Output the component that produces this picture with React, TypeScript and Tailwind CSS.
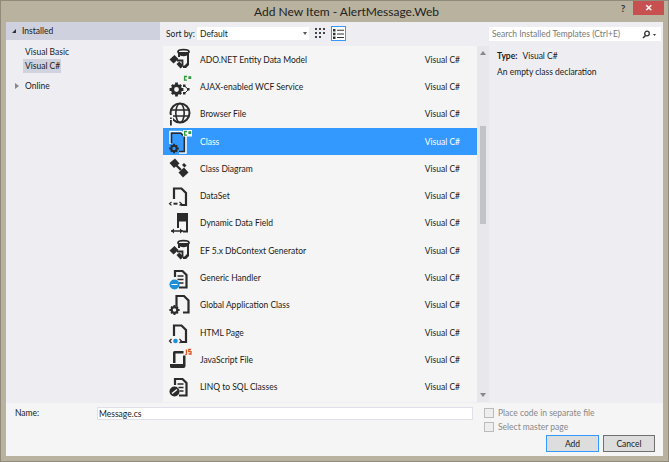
const font = { fontFamily: 'Lato, "Open Sans", sans-serif' };

const Dark = '#2b2b2b';

function Gear({ x, y, s = 1 }: { x: number; y: number; s?: number }) {
  return (
    <g transform={`translate(${x} ${y}) scale(${s})`}>
      <circle r="3.4" fill="none" stroke={Dark} strokeWidth="2.6" />
      <path d="M-1.200 -6h2.400v2h-2.400zM-1.200 4h2.400v2h-2.400zM-6 -1.200h2v2.400h-2zM4 -1.200h2v2.400h-2z" fill={Dark} />
      <path d="M-4.800 -3.200l1.600 -1.600 1.400 1.400 -1.600 1.600zM3.200 -4.800l1.600 1.600 -1.400 1.400 -1.600 -1.600zM-4.800 3.200l1.600 1.600 1.400 -1.400 -1.600 -1.600zM3.200 4.800l1.600 -1.600 -1.400 -1.400 -1.600 1.600z" fill={Dark} />
    </g>
  );
}

function CSharp() {
  return (
    <g>
      <path d="M19 1.500h-2.400v3.600h2.400" fill="none" stroke="#2f9a3f" strokeWidth="1.400" />
      <path d="M20.400 1.200h2.800v2.800h-2.800z" fill="#2f9a3f" />
    </g>
  );
}

function Sheet() {
  return <path d="M6 15V4.500h7.500L18 9v12h-5.500" fill="none" stroke={Dark} strokeWidth="2.200" />;
}

function Entity() {
  return (
    <svg width="24" height="24" viewBox="0 0 24 24">
      <ellipse cx="15.500" cy="3.800" rx="5.500" ry="2.200" fill="none" stroke={Dark} strokeWidth="1.800" />
      <path d="M10 4v5h2V7.500c2 1 5 1 7 0V15l-2.500 2.500H15V20h3l3-3V4z" fill={Dark} />
      <path d="M1.500 11.500L6.500 7l4 4-5 4.500z" fill={Dark} />
      <path d="M9 12.500h5.500V17" fill="none" stroke={Dark} strokeWidth="1.800" />
      <path d="M8.500 16l3-2.500 4 4.500-3 2.500z" fill={Dark} />
    </svg>
  );
}

function Icon({ name }: { name: string }) {
  const common = { width: 24, height: 24, viewBox: '0 0 24 24' };
  switch (name) {
    case 'ado':
    case 'ef':
      return <Entity />;
    case 'ajax':
      return (
        <svg {...common}>
          <CSharp />
          <Gear x={8.500} y={14.500} s={1.150} />
          <path d="M15 9.500h2.500V12H15zM19 13h2.500v2.500H19zM15 17h2.500v2.500H15z" fill={Dark} />
          <path d="M16.500 11l4 3.500-4 4" fill="none" stroke={Dark} strokeWidth="1" />
        </svg>
      );
    case 'browser':
      return (
        <svg {...common}>
          <circle cx="12" cy="11" r="9.500" fill="none" stroke={Dark} strokeWidth="2" />
          <ellipse cx="12" cy="11" rx="4.200" ry="9.500" fill="none" stroke={Dark} strokeWidth="1.600" />
          <path d="M3 8h18M3 14h18" stroke={Dark} strokeWidth="1.600" />
          <path d="M1 13h4v11H1z" fill="#f5f5f5" />
          <path d="M2 18h1.800v5.500H2zM2 15.500h1.800v1.500H2z" fill={Dark} />
        </svg>
      );
    case 'class':
      return (
        <svg {...common}>
          <path d="M2 14V1.500h11.500L18 6v17H11" fill="none" stroke="#fff" strokeWidth="1.500" />
          <path d="M3.500 13V3.200h9.300l3.500 3.500v14.800H11" fill="none" stroke={Dark} strokeWidth="1.500" />
          <Gear x={6} y={18.500} s={0.800} />
          <rect x="15" y="0" width="9" height="6.500" fill="#fff" />
          <CSharp />
        </svg>
      );
    case 'diagram':
      return (
        <svg {...common}>
          <path d="M1.500 6L7 1.500 11.500 6.500 6 11z" fill={Dark} />
          <path d="M10.500 15.500l5.500-5 4.500 5-5.500 5z" fill={Dark} />
          <path d="M8 8l5 5" stroke={Dark} strokeWidth="2.200" />
          <path d="M14 8l2-2 2.500 2.500-2 2z" fill={Dark} />
        </svg>
      );
    case 'dataset':
      return (
        <svg {...common}>
          <Sheet />
          <path d="M3.500 18l-2 1.700 2 1.700M11.500 18l2 1.700-2 1.700" fill="none" stroke={Dark} strokeWidth="1.200" />
          <path d="M5.500 18.700h4v2h-4z" fill={Dark} />
        </svg>
      );
    case 'dynamic':
      return (
        <svg {...common}>
          <path d="M9 2h11v19.500h-5v-2h3V10.500h-7V17H9z" fill={Dark} />
          <path d="M3 20h12" stroke={Dark} strokeWidth="1.500" />
          <path d="M6 17.500v5L3 20zM12 17.500v5l3-2.500z" fill={Dark} />
        </svg>
      );
    case 'handler':
      return (
        <svg {...common}>
          <path d="M7 11V5h7.500l4 4v12.500H11" fill="none" stroke={Dark} strokeWidth="2.200" />
          <path d="M9.500 10h6M9.500 13.500h6M11 17h4.500" stroke={Dark} strokeWidth="1.600" />
          <circle cx="6.500" cy="18.500" r="5" fill="#1e8fd8" />
          <path d="M3.500 18.500h6" stroke="#fff" strokeWidth="1" />
        </svg>
      );
    case 'global':
      return (
        <svg {...common}>
          <g transform="translate(2.500 -1.500)">
            <Sheet />
          </g>
          <Gear x={6.500} y={17} s={0.850} />
        </svg>
      );
    case 'html':
      return (
        <svg {...common}>
          <Sheet />
          <path d="M3.500 18l-2 2 2 2M11.500 18l2 2-2 2" fill="none" stroke={Dark} strokeWidth="1.200" />
          <circle cx="7.500" cy="20" r="2.300" fill="#1e8fd8" />
        </svg>
      );
    case 'js':
      return (
        <svg {...common}>
          <path d="M15.500 3H6.500Q5 3 5 4.500V15h2.500V5.500h8z" fill={Dark} />
          <path d="M15 7.500h2.500V18q0 2-2 2H3.500q-1.500 0-1.500-1.500V16h13z" fill={Dark} />
          <path d="M18.500 1.500v4.200q0 1-1.300 1M23 1.500h-2.200v2.200H23V6h-2.400" fill="none" stroke="#d9541e" strokeWidth="1.300" />
        </svg>
      );
    case 'linq':
      return (
        <svg {...common}>
          <path d="M7 10V4h7.500l4 4v12.500H11" fill="none" stroke={Dark} strokeWidth="2.200" />
          <path d="M9.500 9h6M10.500 12.500h5M11.500 16h4" stroke={Dark} strokeWidth="1.600" />
          <circle cx="6.500" cy="16.500" r="5" fill={Dark} />
          <path d="M4 18.500l5-4" stroke="#fff" strokeWidth="1.400" />
        </svg>
      );
    default:
      return null;
  }
}

const items = [
  ['ado', 'ADO.NET Entity Data Model'],
  ['ajax', 'AJAX-enabled WCF Service'],
  ['browser', 'Browser File'],
  ['class', 'Class'],
  ['diagram', 'Class Diagram'],
  ['dataset', 'DataSet'],
  ['dynamic', 'Dynamic Data Field'],
  ['ef', 'EF 5.x DbContext Generator'],
  ['handler', 'Generic Handler'],
  ['global', 'Global Application Class'],
  ['html', 'HTML Page'],
  ['js', 'JavaScript File'],
  ['linq', 'LINQ to SQL Classes'],
];

export default function App() {
  return (
    <div style={font} className="w-[669px] h-[462px] flex flex-col overflow-hidden bg-[#b9b29e] border border-[#8f8a7a] text-[8.5px] leading-[12px] text-[#1a1a1a] whitespace-nowrap">
      <div className="h-[21px] shrink-0 flex pl-[5px] pr-[4px]">
        <div className="flex-1 pl-[248px] pt-[3px] text-[12px] leading-[15px] text-[#222]">Add New Item - AlertMessage.Web</div>
        <div className="w-[18px] text-center text-[10px] leading-[14px] font-bold text-[#333]">?</div>
        <div className="w-[31px] h-[14px] ml-[1px] bg-[#c75050] text-white flex items-center justify-center text-[9px] font-bold">✕</div>
      </div>

      <div className="flex-1 mx-[5px] mb-[5px] flex flex-col bg-[#eeeef2]">
        <div className="flex flex-1 min-h-0">
          {/* templates tree */}
          <div className="w-[154px] shrink-0">
            <div className="h-[18px] bg-[#cfd1de] flex items-center pl-[6px] gap-[6px]">
              <span className="w-0 h-0 border-l-[4px] border-l-transparent border-b-[4px] border-b-[#333]" />
              <span>Installed</span>
            </div>
            <div className="pl-[17px] pt-[5px] flex flex-col">
              <div className="h-[14px] pl-[2px] flex items-center">Visual Basic</div>
              <div className="h-[14px] w-[38px] pl-[2px] flex items-center bg-[#d0d2dd]">Visual C#</div>
            </div>
            <div className="flex items-center pl-[9px] gap-[6px] mt-[6px] h-[14px]">
              <span className="w-0 h-0 border-y-[3.5px] border-y-transparent border-l-[4px] border-l-[#888]" />
              <span>Online</span>
            </div>
          </div>

          {/* item list */}
          <div className="w-[326px] shrink-0 flex flex-col ml-[3px] pb-[1px]">
            <div className="h-[24px] -ml-[3px] flex items-start pt-[5px] pl-[6px]">
              <span className="w-[31px] leading-[14px]">Sort by:</span>
              <div className="w-[112px] h-[13px] bg-white flex items-center justify-between pl-[3px] pr-[2px]">
                <span>Default</span>
                <span className="w-0 h-0 border-x-[2.5px] border-x-transparent border-t-[3px] border-t-[#555]" />
              </div>
              <svg className="ml-[6px] mt-[1px]" width="11" height="11" viewBox="0 0 11 11" fill="#444">
                <path d="M0 0h2v2H0zM4 0h2v2H4zM8 0h2v2H8zM0 4h2v2H0zM4 4h2v2H4zM8 4h2v2H8zM0 8h2v2H0zM4 8h2v2H4z" />
              </svg>
              <div className="ml-[5px] -mt-[1px] w-[15px] h-[15px] border border-[#3399ff] bg-white flex items-center justify-center">
                <svg width="11" height="10" viewBox="0 0 11 10" fill="#333">
                  <path d="M0 0h2.500v2.500H0zM0 3.700h2.500v2.500H0zM0 7.400h2.500v2.500H0zM4 .7h7v1H4zM4 4.400h7v1H4zM4 8.100h7v1H4z" />
                </svg>
              </div>
            </div>
            <div className="flex flex-1 min-h-0">
              <div className="w-[314px] bg-[#f5f5f5] flex flex-col">
                {items.map(([icon, label]) => {
                  const selected = label === 'Class';
                  return (
                    <div key={label} className={`h-[27.3px] shrink-0 flex items-center pl-[5px] pr-[17px] ${selected ? 'bg-[#3399ff] text-white' : ''}`}>
                      <Icon name={icon} />
                      <span className="ml-[8px] flex-1">{label}</span>
                      <span>Visual C#</span>
                    </div>
                  );
                })}
              </div>
              <div className="w-[12px] bg-[#e8e8ec] flex flex-col items-center pt-[5px] pb-[5px]">
                <span className="w-0 h-0 border-x-[3.5px] border-x-transparent border-b-[4px] border-b-[#888]" />
                <div className="w-[6px] h-[98px] bg-[#c2c3c9] mt-[71px]" />
                <span className="w-0 h-0 mt-auto border-x-[3.5px] border-x-transparent border-t-[4px] border-t-[#888]" />
              </div>
            </div>
          </div>

          {/* details */}
          <div className="flex-1 min-w-0 flex flex-col">
            <div className="h-[24px] flex items-start pt-[5px] pr-[2px]">
              <div className="flex-1 h-[14px] bg-white flex items-center justify-between pl-[3px] pr-[5px] text-[#777]">
                <span>Search Installed Templates (Ctrl+E)</span>
                <svg width="14" height="9" viewBox="0 0 14 9" fill="none" stroke="#333">
                  <circle cx="5" cy="3.500" r="2.300" strokeWidth="1.300" />
                  <path d="M3.500 5.500L1 8" strokeWidth="1.600" />
                  <path d="M11 4h3l-1.500 2z" fill="#333" stroke="none" />
                </svg>
              </div>
            </div>
            <div className="pl-[8px] pt-[4px]">
              <div className="h-[12px] flex items-center gap-[5px]">
                <span className="font-bold">Type:</span>
                <span>Visual C#</span>
              </div>
              <div className="mt-[4px]">An empty class declaration</div>
            </div>
          </div>
        </div>

        {/* name row and buttons */}
        <div className="h-[53px] shrink-0 bg-[#f5f5f5] flex pt-[3px] pr-[8px]">
          <div className="w-[91px] pl-[9px] h-[14px] flex items-center shrink-0">Name:</div>
          <div className="w-[376px] h-[13px] mt-[1px] bg-white border border-[#e0e0ea] pl-[1px] flex items-center shrink-0">Message.cs</div>
          <div className="ml-[11px] flex-1 flex flex-col">
            <div className="h-[14px] flex items-center gap-[4px] text-[#888]">
              <span className="w-[10px] h-[10px] border border-[#bbb] bg-[#eee]" />
              Place code in separate file
            </div>
            <div className="h-[14px] flex items-center gap-[4px] text-[#888]">
              <span className="w-[10px] h-[10px] border border-[#bbb] bg-[#eee]" />
              Select master page
            </div>
            <div className="flex justify-end gap-[4px] mt-[1px]">
              <div className="w-[53px] h-[17px] flex items-center justify-center bg-[#dddddd] border border-[#3399ff]">Add</div>
              <div className="w-[52px] h-[17px] flex items-center justify-center bg-[#dddddd] border border-[#707070]">Cancel</div>
            </div>
          </div>
        </div>
      </div>
    </div>
  );
}
